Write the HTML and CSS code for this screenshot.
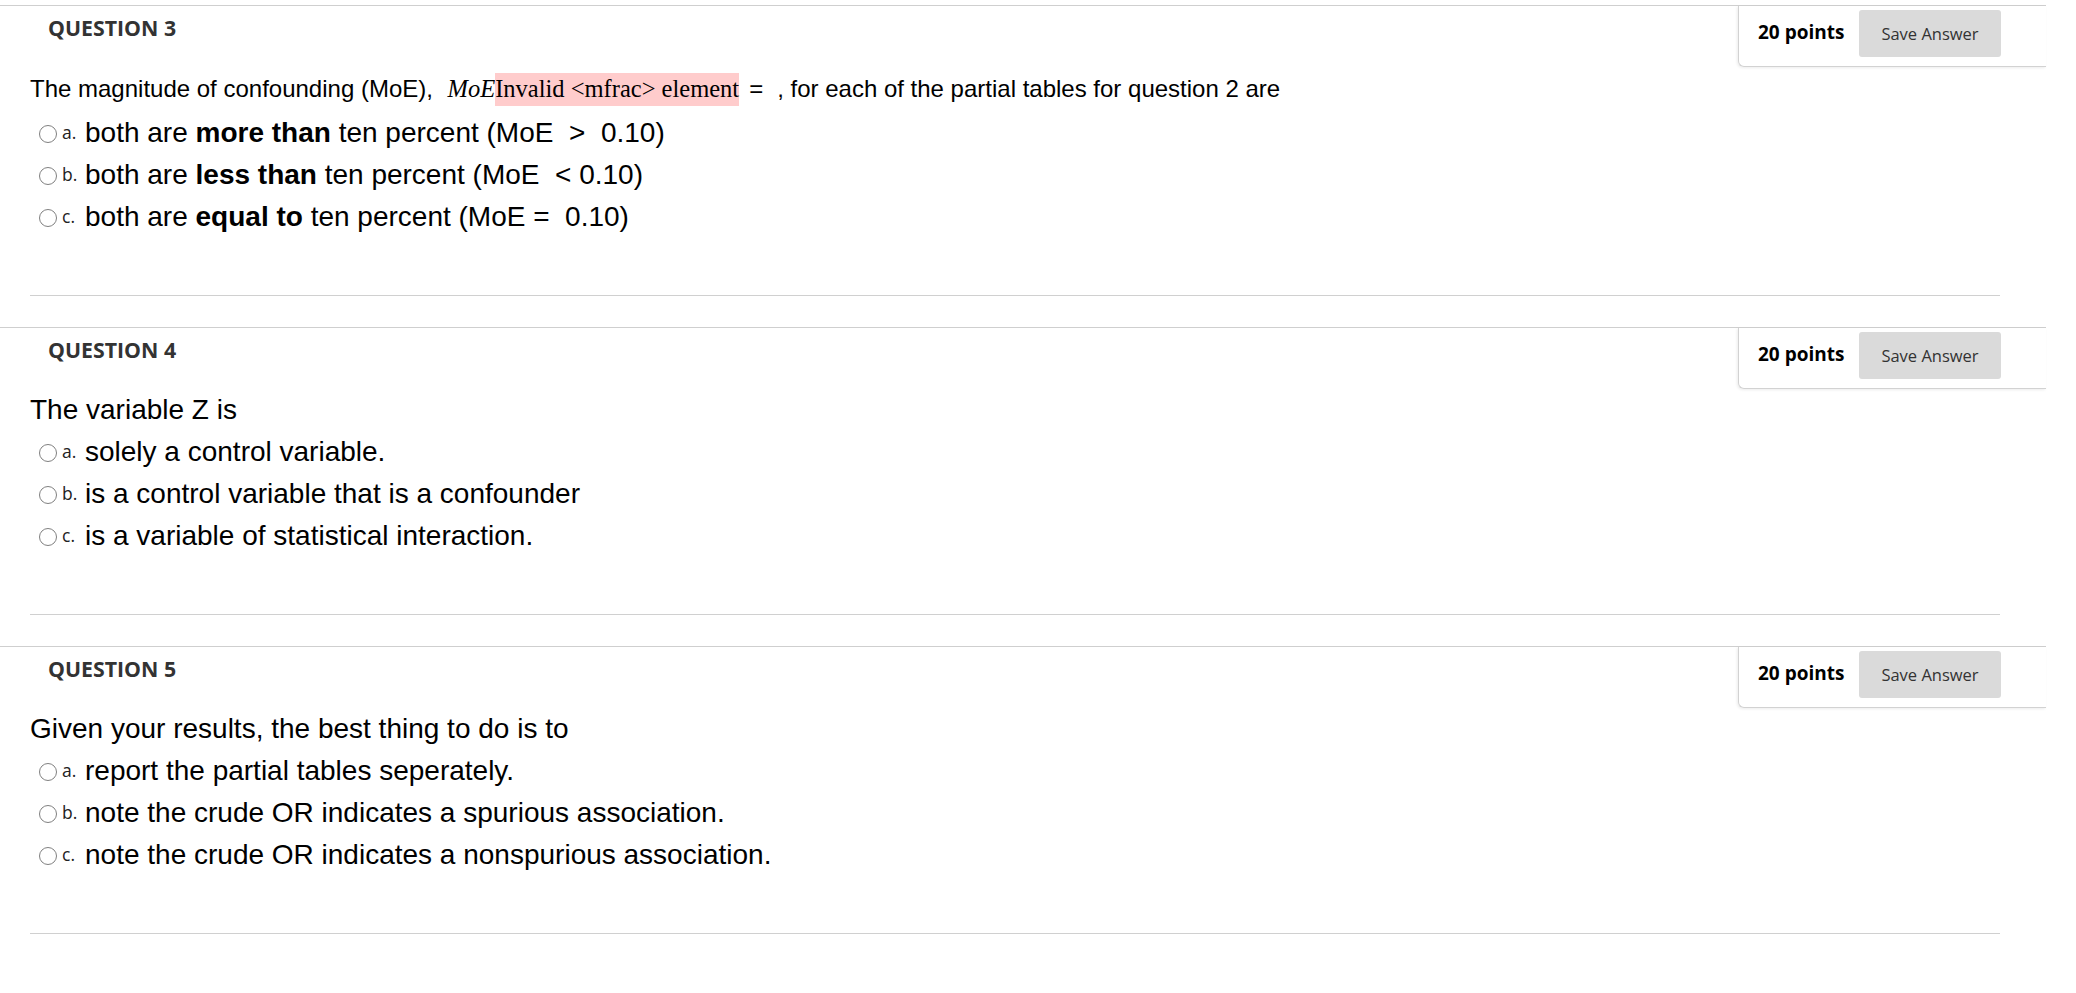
FILE: index.html
```html
<!DOCTYPE html>
<html lang="en">
<head>
<meta charset="utf-8">
<title>Questions</title>
<link rel="stylesheet" href="styles.css">
</head>
<body>
<div class="page">
  <section class="question q3">
    <div class="qhead">
      <h3 class="qtitle">QUESTION 3</h3>
      <div class="qmeta">
        <span class="points">20 points</span>
        <button class="save" type="button">Save Answer</button>
      </div>
    </div>
    <div class="qbody">
      <p class="qtext qtext-sm">The magnitude of confounding (MoE), <span class="math"><i class="mi">MoE</i><span class="merror">Invalid &lt;mfrac&gt; element</span><span class="mo">=</span></span>, for each of the partial tables for question 2 are</p>
      <ul class="answers">
        <li class="answer"><span class="radio"></span><span class="letter">a.</span><span class="atext">both are <b>more than</b> ten percent (MoE &nbsp;&gt; &nbsp;0.10)</span></li>
        <li class="answer"><span class="radio"></span><span class="letter">b.</span><span class="atext">both are <b>less than</b> ten percent (MoE &nbsp;&lt; 0.10)</span></li>
        <li class="answer"><span class="radio"></span><span class="letter">c.</span><span class="atext">both are <b>equal to</b> ten percent (MoE = &nbsp;0.10)</span></li>
      </ul>
    </div>
    <hr class="sep">
  </section>

  <section class="question">
    <div class="qhead">
      <h3 class="qtitle">QUESTION 4</h3>
      <div class="qmeta">
        <span class="points">20 points</span>
        <button class="save" type="button">Save Answer</button>
      </div>
    </div>
    <div class="qbody">
      <p class="qtext">The variable Z is</p>
      <ul class="answers">
        <li class="answer"><span class="radio"></span><span class="letter">a.</span><span class="atext">solely a control variable.</span></li>
        <li class="answer"><span class="radio"></span><span class="letter">b.</span><span class="atext">is a control variable that is a confounder</span></li>
        <li class="answer"><span class="radio"></span><span class="letter">c.</span><span class="atext">is a variable of statistical interaction.</span></li>
      </ul>
    </div>
    <hr class="sep">
  </section>

  <section class="question">
    <div class="qhead">
      <h3 class="qtitle">QUESTION 5</h3>
      <div class="qmeta">
        <span class="points">20 points</span>
        <button class="save" type="button">Save Answer</button>
      </div>
    </div>
    <div class="qbody">
      <p class="qtext">Given your results, the best thing to do is to</p>
      <ul class="answers">
        <li class="answer"><span class="radio"></span><span class="letter">a.</span><span class="atext">report the partial tables seperately.</span></li>
        <li class="answer"><span class="radio"></span><span class="letter">b.</span><span class="atext">note the crude OR indicates a spurious association.</span></li>
        <li class="answer"><span class="radio"></span><span class="letter">c.</span><span class="atext">note the crude OR indicates a nonspurious association.</span></li>
      </ul>
    </div>
    <hr class="sep">
  </section>
</div>
</body>
</html>
```

FILE: styles.css
```css
html, body {
  margin: 0;
  padding: 0;
  background: #ffffff;
}

body {
  font-family: "Liberation Sans", Arial, sans-serif;
  color: #000;
}

.page {
  width: 2046px;
  padding-top: 5px;
}

.question {
  border-top: 1px solid #cfcfcf;
}

.qhead {
  display: flex;
  justify-content: space-between;
  align-items: flex-start;
  height: 61px;
}

.qtitle {
  margin: 0;
  padding: 11px 0 0 48px;
  font-family: "Open Sans", "Liberation Sans", sans-serif;
  font-weight: 700;
  font-size: 21.3px;
  line-height: 22px;
  color: #333;
}

.qmeta {
  display: flex;
  align-items: center;
  justify-content: space-between;
  box-sizing: border-box;
  width: 308px;
  height: 61px;
  padding: 4px 45px 9px 19px;
  border-left: 1px solid #d2d2d2;
  border-bottom: 1px solid #d2d2d2;
  border-bottom-left-radius: 6px;
  box-shadow: -1px 1px 3px rgba(0, 0, 0, 0.08);
}

.points {
  flex: none;
  white-space: nowrap;
  font-family: "Open Sans", "Liberation Sans", sans-serif;
  font-weight: 700;
  font-size: 19px;
  color: #000;
  margin-top: -3px;
}

.save {
  flex: none;
  width: 142px;
  height: 47px;
  padding: 0;
  border: none;
  border-radius: 3px;
  background: #dadada;
  font-family: "Open Sans", "Liberation Sans", sans-serif;
  font-size: 16.5px;
  color: #333;
}

.qbody {
  padding-left: 30px;
}

.qtext {
  margin: 5px 0 0 0;
  font-size: 28px;
  line-height: 32px;
}

.qtext-sm {
  margin-top: 4px;
  font-size: 24px;
  line-height: 36px;
}

.math {
  margin-left: 8px;
  font-family: "Liberation Serif", "Times New Roman", serif;
  font-size: 24.5px;
}

.mi {
  font-style: italic;
}

.merror {
  background: #ffcccc;
  padding: 2px 0 4px 0;
}

.mo {
  margin: 0 14px 0 10px;
  font-family: "Liberation Sans", Arial, sans-serif;
  font-size: 24px;
}

.answers {
  list-style: none;
  margin: 5px 0 0 0;
  padding: 0;
}

.answer {
  display: flex;
  align-items: center;
  height: 42px;
}

.radio {
  box-sizing: border-box;
  flex: none;
  width: 18px;
  height: 18px;
  margin: 2px 5px 0 9px;
  border: 1.2px solid #808080;
  border-radius: 50%;
}

.letter {
  flex: none;
  width: 23px;
  font-family: "Open Sans", "Liberation Sans", sans-serif;
  font-size: 17.5px;
  color: #222;
  margin-top: -3px;
}

.atext {
  font-size: 28px;
  line-height: 42px;
}

.sep {
  margin: 57px 46px 31px 30px;
  border: none;
  border-top: 1px solid #d0d0d0;
  height: 0;
}
```
